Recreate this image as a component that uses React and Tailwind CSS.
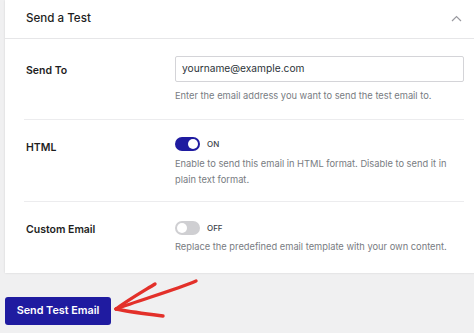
import React from "react";

function Toggle({ on }) {
  return on ? (
    <div className="w-[25px] h-[14px] rounded-full bg-[#1f1ba0] relative">
      <div className="absolute right-[2px] top-[2px] w-[10px] h-[10px] rounded-full bg-white" />
    </div>
  ) : (
    <div className="w-[25px] h-[14px] rounded-full bg-[#cfcfd2] relative">
      <div className="absolute left-[2px] top-[2px] w-[10px] h-[10px] rounded-full bg-white" />
    </div>
  );
}

export default function App() {
  return (
    <div
      className="w-[474px] h-[333px] overflow-hidden bg-[#f0f0f1] relative"
      style={{ fontFamily: "Inter, 'Noto Sans', sans-serif" }}
    >
      <div className="ml-[5px] w-[480px] bg-white shadow-[0_0_2px_rgba(0,0,0,0.12)]">
        <div className="h-[39px] flex items-center justify-between pl-[21px] pr-[23px] border-b border-[#e6e6e8]">
          <span className="text-[11.6px] font-medium text-[#1e1e1e]">Send a Test</span>
          <svg width="11" height="7" viewBox="0 0 11 7" className="mt-[-2px]">
            <path d="M1 6 L5.5 1.5 L10 6" fill="none" stroke="#9a9aa0" strokeWidth="1.2" />
          </svg>
        </div>
        <div className="pl-[19px] pr-[21px]">
          <div className="flex pt-[17px] h-[81px] border-b border-[#ececee]">
            <div className="w-[151px] pl-[2px] pt-[7px] text-[10.5px] font-semibold text-[#1e1e1e]">Send To</div>
            <div className="flex-1">
              <div className="h-[26px] border border-[#d4d4d8] rounded-[2px] flex items-center px-[6px] text-[10.2px] text-[#2c3338]">
                yourname@example.com
              </div>
              <div className="mt-[7px] text-[9.3px] text-[#787c82]">
                Enter the email address you want to send the test email to.
              </div>
            </div>
          </div>
          <div className="flex pt-[17px] h-[82px] border-b border-[#ececee]">
            <div className="w-[151px] pl-[2px] pt-[3px] text-[10.5px] font-semibold text-[#1e1e1e]">HTML</div>
            <div className="flex-1">
              <div className="flex items-center gap-[7px] h-[14px]">
                <Toggle on />
                <span className="text-[8px] font-medium text-[#3c434a]">ON</span>
              </div>
              <div className="mt-[5px] text-[9.3px] leading-[16px] text-[#787c82]">
                Enable to send this email in HTML format. Disable to send it in plain text format.
              </div>
            </div>
          </div>
          <div className="flex pt-[19px] h-[71px]">
            <div className="w-[151px] pl-[2px] pt-[1px] text-[10.5px] font-semibold text-[#1e1e1e]">Custom Email</div>
            <div className="flex-1">
              <div className="flex items-center gap-[7px] h-[14px]">
                <Toggle on={false} />
                <span className="text-[8px] font-medium text-[#3c434a]">OFF</span>
              </div>
              <div className="mt-[5px] text-[9.3px] text-[#787c82]">
                Replace the predefined email template with your own content.
              </div>
            </div>
          </div>
        </div>
      </div>
      <div className="mt-[24px] ml-[5px] flex items-center">
        <button className="w-[106px] h-[28px] rounded-[3px] bg-[#1f1ba0] text-white text-[10.8px] font-semibold">
          Send Test Email
        </button>
      </div>
      <svg className="absolute left-[108px] top-[276px]" width="100" height="50" viewBox="108 276 100 50">
        <g fill="none" stroke="#e3302a" strokeWidth="3.4" strokeLinecap="round" strokeLinejoin="round">
          <path d="M196 281 C175 290 140 300 116 309" />
          <path d="M155 284 C142 292 128 300 116 309" />
          <path d="M116 309 C130 312 148 314 163 316" />
        </g>
      </svg>
    </div>
  );
}
